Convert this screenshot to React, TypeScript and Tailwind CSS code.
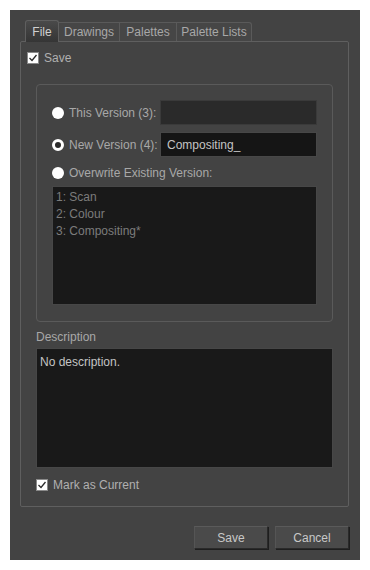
const font = { fontFamily: '"Liberation Sans", Arial, sans-serif' };

function Check({ label }: { label: string }) {
  return (
    <div className="flex items-center gap-[5px]">
      <span className="flex h-[12px] w-[12px] items-center justify-center border border-[#8a8a8a] bg-white">
        <svg width="10" height="10" viewBox="0 0 10 10">
          <path d="M1.5 5 L4 7.5 L8.5 2" fill="none" stroke="#2b2b2b" strokeWidth="1.3" />
        </svg>
      </span>
      <span className="text-[12px] text-[#b0b0b0]">{label}</span>
    </div>
  );
}

function Radio({ checked, label }: { checked?: boolean; label: string }) {
  return (
    <div className="flex items-center gap-[5px]">
      {checked ? (
        <span className="h-[12px] w-[12px] rounded-full border-[3px] border-white bg-[#2b2b2b]" />
      ) : (
        <span className="h-[12px] w-[12px] rounded-full bg-white" />
      )}
      <span className="text-[12px] text-[#a8a8a8]">{label}</span>
    </div>
  );
}

function Tab({ label, width, active }: { label: string; width: string; active?: boolean }) {
  return active ? (
    <div
      className={`relative z-10 -mb-px flex h-[22px] items-center justify-center rounded-t-[3px] border border-b-0 border-[#5f5f5f] bg-gradient-to-b from-[#4a4a4a] to-[#353535] text-[12px] text-[#d0d0d0] ${width}`}
    >
      {label}
    </div>
  ) : (
    <div
      className={`flex h-[19px] items-center justify-center border border-b-0 border-l-0 border-[#5a5a5a] bg-[#464646] text-[12px] text-[#a8a8a8] last:rounded-tr-[3px] ${width}`}
    >
      {label}
    </div>
  );
}

export default function App() {
  return (
    <div className="min-h-screen bg-white p-[10px]" style={font}>
      <div className="flex h-[550px] w-[350px] flex-col bg-[#434343] px-[10px] pt-[10px]">
        {/* Tabs */}
        <div className="flex items-end pl-[5px]">
          <Tab label="File" width="w-[34px]" active />
          <Tab label="Drawings" width="w-[61px]" />
          <Tab label="Palettes" width="w-[57px]" />
          <Tab label="Palette Lists" width="w-[75px]" />
        </div>

        {/* Pane */}
        <div className="flex h-[466px] w-[329px] flex-col rounded-[2px] border border-[#5f5f5f] px-[6px] pt-[7px]">
          <Check label="Save" />

          <div className="ml-[9px] mt-[17px] flex h-[238px] w-[297px] flex-col rounded-[4px] border border-[#5a5a5a] px-[15px] pt-[15px]">
            <div className="flex items-center justify-between">
              <Radio label="This Version (3):" />
              <div className="h-[25px] w-[157px] border border-[#3a3a3a] bg-[#2a2a2a]" />
            </div>
            <div className="mt-[7px] flex items-center justify-between">
              <Radio checked label="New Version (4):" />
              <div className="flex h-[25px] w-[157px] items-center border border-[#474747] bg-[#151515] px-[6px] text-[12px] text-[#c4c4c4]">
                Compositing_
              </div>
            </div>
            <div className="mt-[7px]">
              <Radio label="Overwrite Existing Version:" />
            </div>
            <div className="mt-[4px] flex h-[119px] w-[265px] flex-col border border-[#474747] bg-[#191919] px-[3px] pt-[2px] text-[12px] leading-[17px] text-[#7c7c7c]">
              <span>1: Scan</span>
              <span>2: Colour</span>
              <span>3: Compositing*</span>
            </div>
          </div>

          <div className="ml-[9px] mt-[6px] text-[12px] text-[#a8a8a8]">Description</div>
          <div className="ml-[9px] mt-[2px] h-[120px] w-[297px] border border-[#474747] bg-[#191919] px-[3px] pt-[4px] text-[12px] text-[#c4c4c4]">
            No description.
          </div>

          <div className="ml-[9px] mt-[8px]">
            <Check label="Mark as Current" />
          </div>
        </div>

        {/* Buttons */}
        <div className="mt-[19px] flex justify-end gap-[7px] pr-[1px]">
          <button className="h-[23px] w-[74px] border border-[#2a2a2a] border-t-[#5a5a5a] border-l-[#555555] bg-[#4a4a4a] text-[12px] text-[#c8c8c8] shadow-[1px_1px_0_#1e1e1e]">
            Save
          </button>
          <button className="h-[23px] w-[74px] border border-[#2a2a2a] border-t-[#5a5a5a] border-l-[#555555] bg-[#4a4a4a] text-[12px] text-[#c8c8c8] shadow-[1px_1px_0_#1e1e1e]">
            Cancel
          </button>
        </div>
      </div>
    </div>
  );
}
